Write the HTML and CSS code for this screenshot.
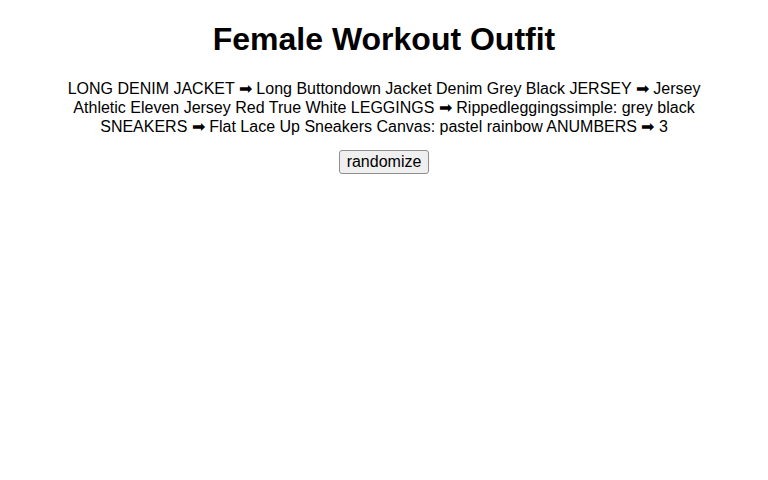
FILE: index.html
```html
<!DOCTYPE html>
<html>

<head>
    <meta name="viewport" content="width=device-width">
    <meta charset="utf-8">

    <title>Female Workout Outfit</title>
    <link rel="stylesheet" href="styles.css">
</head>

<body>
    <div class="page">
        <h1 class="title">Female Workout Outfit</h1>
        <p class="outfit" id="outfit">LONG DENIM JACKET ➡ Long Buttondown Jacket Denim Grey Black JERSEY ➡ Jersey Athletic Eleven Jersey Red True White LEGGINGS ➡ Rippedleggingssimple: grey black SNEAKERS ➡ Flat Lace Up Sneakers Canvas: pastel rainbow ANUMBERS ➡ 3</p>
        <button class="randomize" onclick="randomize()">randomize</button>
    </div>
    <script>
        function randomize() {
            location.reload();
        }
    </script>
</body>

</html>
```

FILE: styles.css
```css
body {
    font-family: "Liberation Sans", Arial, sans-serif;
    margin: 0;
    padding: 0;
    color: #000;
    background-color: #fff;
}

.page {
    max-width: 640px;
    margin: 0 auto;
    text-align: center;
}

.title {
    font-size: 32px;
    margin: 21px 0;
}

.outfit {
    font-size: 16px;
    margin: 16px 0 14px;
}

.randomize {
    display: block;
    margin: 0 auto;
    font-family: "Liberation Sans", Arial, sans-serif;
    font-size: 16px;
    line-height: 18px;
    padding: 2px 7px;
    color: #000;
    background-color: #efefef;
    border: 1px solid #8f8f8f;
    border-radius: 3px;
}
```
